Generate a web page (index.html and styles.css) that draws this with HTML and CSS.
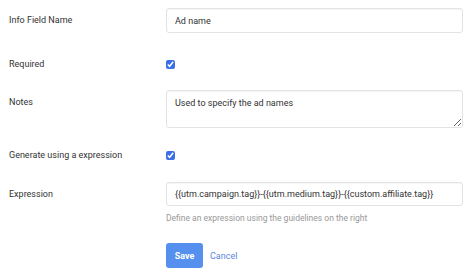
FILE: index.html
```html
<!DOCTYPE html>
<html lang="en">
<head>
    <meta charset="UTF-8">
    <title>Info Field</title>
    <link rel="stylesheet" href="styles.css">
</head>
<body>
<form class="field-form">
    <div class="form-row row-name">
        <label for="fieldName">Info Field Name</label>
        <div class="control">
            <input type="text" id="fieldName" value="Ad name">
        </div>
    </div>
    <div class="form-row row-check row-required">
        <label for="required">Required</label>
        <div class="control">
            <input type="checkbox" id="required" checked>
        </div>
    </div>
    <div class="form-row row-notes">
        <label for="notes">Notes</label>
        <div class="control">
            <textarea id="notes">Used to specify the ad names</textarea>
        </div>
    </div>
    <div class="form-row row-check row-generate">
        <label for="generate">Generate using a expression</label>
        <div class="control">
            <input type="checkbox" id="generate" checked>
        </div>
    </div>
    <div class="form-row row-expression">
        <label for="expression">Expression</label>
        <div class="control">
            <input type="text" id="expression" value="{{utm.campaign.tag}}-{{utm.medium.tag}}-{{custom.affiliate.tag}}">
            <p class="help">Define an expression using the guidelines on the right</p>
        </div>
    </div>
    <div class="form-row row-actions">
        <span></span>
        <div class="control actions">
            <button type="button" class="save">Save</button>
            <a href="#" class="cancel">Cancel</a>
        </div>
    </div>
</form>
</body>
</html>
```
FILE: styles.css
```css
body {
    font-family: Roboto, "Liberation Sans", sans-serif;
    font-size: 9px;
    color: #333;
    background-color: #fff;
    margin: 0;
    padding: 8px 11px 0 9px;
}
.form-row {
    display: flex;
    align-items: flex-start;
}
.form-row label {
    width: 157px;
    flex-shrink: 0;
    line-height: 25px;
}
.control {
    flex: 1;
}
.control input[type="text"], .control textarea {
    box-sizing: border-box;
    width: 100%;
    height: 25px;
    padding: 0 8px;
    border: 1px solid #e3e3e3;
    border-radius: 3px;
    font-family: inherit;
    font-size: 9px;
    color: #333;
    box-shadow: inset 0 1px 1px rgba(0, 0, 0, 0.04);
}
.control textarea {
    display: block;
    height: 38px;
    padding: 6px 8px;
    line-height: 12px;
    resize: vertical;
}
.row-check label {
    line-height: 19px;
}
.row-check .control {
    height: 19px;
    display: flex;
    align-items: center;
}
.row-check input {
    width: 9px;
    height: 9px;
    margin: 0;
    accent-color: #3a6fe8;
}
.row-required {
    margin-top: 22px;
}
.row-notes {
    margin-top: 16px;
}
.row-notes label {
    line-height: 24px;
}
.row-generate {
    margin-top: 18px;
}
.row-expression {
    margin-top: 17px;
}
.row-expression input[type="text"] {
    height: 24px;
}
.help {
    margin: 6px 0 0;
    font-size: 8.5px;
    line-height: 12px;
    color: #999;
}
.row-actions {
    margin-top: 19px;
}
.row-actions span {
    width: 157px;
    flex-shrink: 0;
}
.actions {
    display: flex;
    align-items: center;
    gap: 7px;
}
.save {
    width: 37px;
    height: 25px;
    padding: 0;
    border: none;
    border-radius: 3px;
    background-color: #5590ee;
    color: #fff;
    font-family: inherit;
    font-size: 9px;
    font-weight: bold;
    cursor: pointer;
}
.cancel {
    color: #5a87dc;
    text-decoration: none;
}
```
